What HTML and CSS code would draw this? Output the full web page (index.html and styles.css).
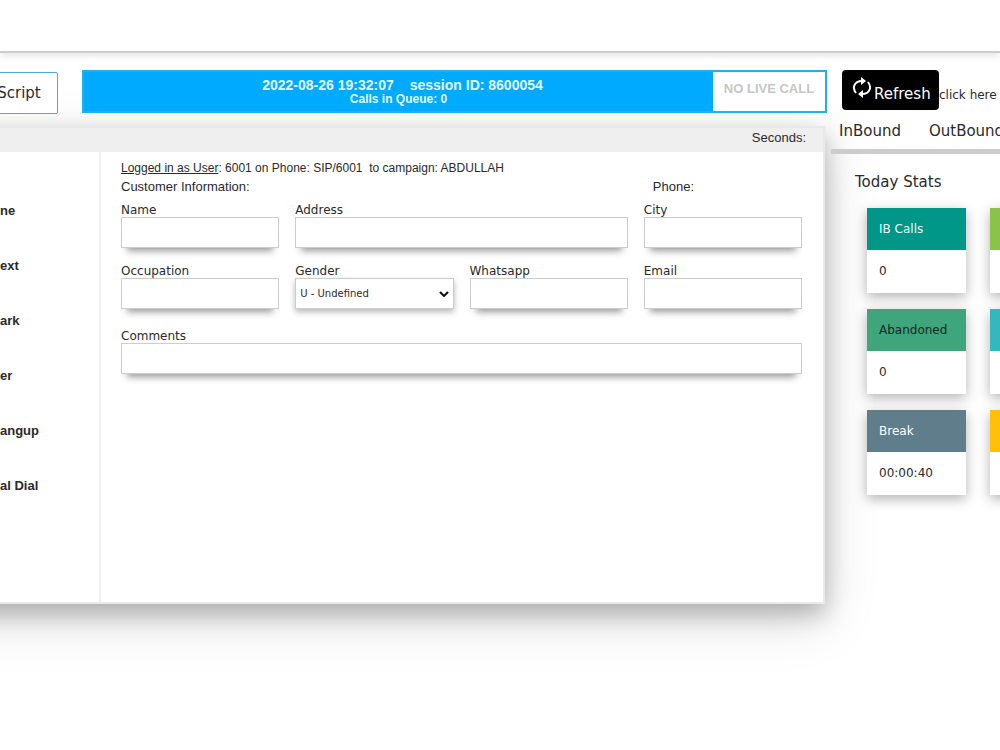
FILE: index.html
```html
<!DOCTYPE html>
<html lang="en">
<head>
<meta charset="utf-8">
<title>Agent Console</title>
<link rel="stylesheet" href="styles.css">
</head>
<body>
<header class="topbar"></header>
<div class="layout">
  <main class="main">
    <div class="toolbar">
      <button class="script-btn" type="button">Script</button>
      <div class="status">
        <div class="status-text">
          <p class="session"><span>2022-08-26 19:32:07</span><span>session ID: 8600054</span></p>
          <p class="queue">Calls in Queue: 0</p>
        </div>
        <div class="live">NO LIVE CALL</div>
      </div>
    </div>
    <section class="panel">
      <div class="panel-head">Seconds:</div>
      <div class="panel-body">
        <nav class="actions">
          <a href="#">ne</a>
          <a href="#">ext</a>
          <a href="#">ark</a>
          <a href="#">er</a>
          <a href="#">angup</a>
          <a href="#">al Dial</a>
        </nav>
        <form class="customer">
          <p class="login"><a href="#">Logged in as User</a>: 6001 on Phone: SIP/6001&nbsp; to campaign: ABDULLAH</p>
          <div class="info"><span>Customer Information:</span><span class="phone">Phone:</span></div>
          <div class="fields">
            <div class="field"><label for="name">Name</label><input id="name" type="text"></div>
            <div class="field wide"><label for="address">Address</label><input id="address" type="text"></div>
            <div class="field"><label for="city">City</label><input id="city" type="text"></div>
            <div class="field"><label for="occupation">Occupation</label><input id="occupation" type="text"></div>
            <div class="field"><label for="gender">Gender</label>
              <div class="select-wrap">
                <select id="gender"><option>U - Undefined</option></select>
                <svg class="chevron" viewBox="0 0 10 6" width="10" height="6"><path d="M1 1l4 4 4-4" fill="none" stroke="#111" stroke-width="2"/></svg>
              </div>
            </div>
            <div class="field"><label for="whatsapp">Whatsapp</label><input id="whatsapp" type="text"></div>
            <div class="field"><label for="email">Email</label><input id="email" type="text"></div>
            <div class="field full"><label for="comments">Comments</label><input id="comments" type="text"></div>
          </div>
        </form>
      </div>
    </section>
  </main>
  <aside class="side">
    <div class="refresh-row">
      <button class="refresh" type="button">
        <svg viewBox="0 0 20 24" width="20" height="24"><g fill="none" stroke="#fff" stroke-width="2"><path d="M4 17C0 12 2 5 10 5h2"/><path d="M16 6c4 5 2 12-6 12H8"/></g><path d="M9 1l5 4-5 4zM11 14l-5 4 5 4z" fill="#fff"/></svg>
        <span>Refresh</span>
      </button>
      <span class="hint">click here</span>
    </div>
    <div class="tabs"><a href="#">InBound</a><a href="#">OutBound</a></div>
    <h2>Today Stats</h2>
    <div class="cards">
      <div class="card"><h3 class="teal">IB Calls</h3><p>0</p></div>
      <div class="card"><h3 class="lime"></h3><p></p></div>
      <div class="card"><h3 class="green">Abandoned</h3><p>0</p></div>
      <div class="card"><h3 class="cyan"></h3><p></p></div>
      <div class="card"><h3 class="slate">Break</h3><p>00:00:40</p></div>
      <div class="card"><h3 class="amber"></h3><p></p></div>
    </div>
  </aside>
</div>
</body>
</html>
```
FILE: styles.css
```css
* { box-sizing: border-box; }
body {
  margin: 0;
  min-height: 100vh;
  overflow: hidden;
  background: #fff;
  color: #2a2a2a;
  font-family: "DejaVu Sans", sans-serif;
  font-size: 12px;
}
p, h2, h3 { margin: 0; font-weight: inherit; }
h2, h3 { font-weight: normal; }
a { color: inherit; text-decoration: none; }

.topbar {
  height: 53px;
  border-bottom: 2px solid #ccc;
  box-shadow: 0 2px 8px rgba(0, 0, 0, 0.12);
}
.layout {
  display: grid;
  grid-template-columns: minmax(0, 1fr) 169px;
}
.main { padding: 17px 4px 0 0; }

.toolbar { display: flex; gap: 24px; position: relative; z-index: 1; }
.script-btn {
  width: 78px;
  height: 42px;
  margin: 2px 0 0 -20px;
  padding: 0 16px;
  border: 1px solid #4fa8d5;
  border-radius: 2px;
  background: #fff;
  color: #2a2a2a;
  font: 15px "DejaVu Sans", sans-serif;
}
.status {
  flex: 1;
  display: flex;
  height: 43px;
  border: 2px solid #1fb0e8;
  background: #00aaff;
  font-family: "Liberation Sans", sans-serif;
  font-weight: bold;
}
.status-text {
  flex: 1;
  padding-top: 5px;
  color: #e2fbff;
  text-align: center;
}
.session {
  display: flex;
  justify-content: center;
  gap: 16px;
  padding-left: 8px;
  font-size: 14px;
  line-height: 16px;
}
.queue { font-size: 12px; line-height: 12px; }
.live {
  width: 112px;
  padding-top: 9px;
  background: #fff;
  color: #c6c6c6;
  font-size: 13px;
  line-height: 16px;
  text-align: center;
}

.panel {
  margin: 12px 2px 0 -80px;
  padding-left: 80px;
  border: 2px solid #e9e9e9;
  border-left: 0;
  background: #fff;
  box-shadow: 0 16px 50px rgba(0, 0, 0, 0.15), 0 10px 22px rgba(0, 0, 0, 0.24);
}
.panel-head {
  height: 24px;
  margin-left: -80px;
  padding-right: 17px;
  background: #efefef;
  font: 13px/20px "Liberation Sans", sans-serif;
  text-align: right;
}
.panel-body { display: flex; min-height: 450px; }
.actions {
  display: flex;
  flex-direction: column;
  gap: 37px;
  width: 101px;
  padding-top: 50px;
  border-right: 2px solid #f0f0f0;
  font: bold 13px/18px "Liberation Sans", sans-serif;
}
.customer { flex: 1; padding: 7px 21px 0 20px; }
.login { font: 12px/18px "Liberation Sans", sans-serif; }
.login a { text-decoration: underline; }
.info {
  display: flex;
  justify-content: space-between;
  padding-right: 108px;
  font: 13px/20px "Liberation Sans", sans-serif;
}
.fields {
  display: grid;
  grid-template-columns: repeat(4, minmax(0, 1fr));
  gap: 16px;
  margin-top: 6px;
}
.wide { grid-column: span 2; }
.full { grid-column: 1 / -1; margin-top: 4px; }
.field label { display: block; line-height: 14px; }
.field input, .field select {
  display: block;
  width: 100%;
  height: 31px;
  border: 1px solid #ccc;
  border-radius: 0;
  background: #fff;
  box-shadow: 0 9px 7px -6px #999;
  font: 12px "DejaVu Sans", sans-serif;
}
.field select {
  padding: 0 4px;
  appearance: none;
  box-shadow: 0 3px 6px rgba(0, 0, 0, 0.28);
  color: #2a2a2a;
  font-size: 10px;
}
.select-wrap { position: relative; }
.chevron { position: absolute; right: 5px; top: 13px; pointer-events: none; }

.side { position: relative; min-width: 0; padding-top: 17px; overflow: hidden; }
.refresh-row { display: flex; padding-left: 11px; white-space: nowrap; }
.refresh {
  display: flex;
  flex: none;
  align-items: flex-start;
  gap: 2px;
  width: 97px;
  height: 40px;
  padding: 6px 0 0 10px;
  border: 0;
  border-radius: 4px;
  background: #000;
  color: #fff;
  font: 15px/18px "DejaVu Sans", sans-serif;
}
.refresh span { padding-top: 9px; }
.hint { padding-top: 18px; line-height: 14px; }
.tabs {
  display: flex;
  gap: 28px;
  height: 44px;
  padding: 12px 0 0 8px;
  border-bottom: 5px solid #ccc;
  font-size: 15px;
  line-height: 18px;
}
h2 { padding: 18px 0 0 24px; font-size: 15px; line-height: 20px; }
.cards {
  display: grid;
  grid-template-columns: 99px 99px;
  gap: 16px 24px;
  padding: 16px 0 40px 36px;
}
.card { background: #fff; box-shadow: 0 4px 12px rgba(0, 0, 0, 0.3); }
.card h3, .card p { height: 42px; padding: 0 12px; font-size: 12px; line-height: 42px; }
.card p { height: 43px; }
.card .teal { background: #009688; color: #e8fffa; }
.card .lime { background: #8bc34a; }
.card .green { background: #3fa57c; color: #12291f; }
.card .cyan { background: #35b8bd; }
.card .slate { background: #607d8b; color: #fff; }
.card .amber { background: #ffc107; }
```
